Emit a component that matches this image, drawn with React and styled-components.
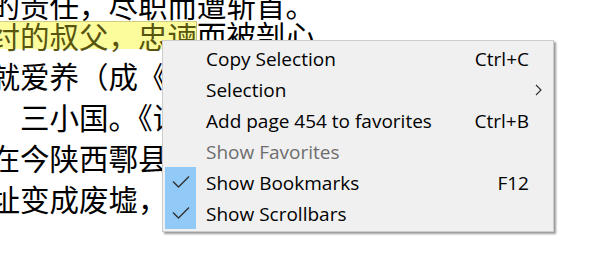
import React from "react";
import styled, { createGlobalStyle } from "styled-components";

const GlobalStyle = createGlobalStyle`
  html, body { margin: 0; padding: 0; background: #ffffff; overflow: hidden; }
`;

const Page = styled.div`
  position: relative;
  width: 605px;
  height: 254px;
  overflow: hidden;
  background: #ffffff;
`;

const TextBlock = styled.div`
  margin-left: -9.5px;
  margin-top: -5.5px;
  font-family: "Noto Sans CJK SC", "Noto Sans CJK JP", sans-serif;
  font-size: 29.5px;
  color: #000000;
  white-space: nowrap;
`;

const Line = styled.div`
  display: flex;
  align-items: center;
  height: ${(p) => p.$h}px;
`;

const Run = styled.span`
  display: block;
  line-height: 29.5px;
`;

const Highlight = styled.span`
  display: block;
  height: 28px;
  line-height: 28px;
  background: #fcfc9c;
  color: #57550f;
  box-shadow: inset 0 1px 0 #d2cd80, inset -1px 0 0 #c4bf78;
`;

const Menu = styled.div`
  position: absolute;
  left: 162px;
  top: 40px;
  width: 392px;
  box-sizing: border-box;
  background: #f0f0f0;
  border: 1px solid #cccccc;
  box-shadow: 2px 2px 2px rgba(0, 0, 0, 0.4);
  padding: 2px;
  font-family: "Open Sans", "Noto Sans", sans-serif;
  font-size: 19px;
`;

const Row = styled.div`
  display: grid;
  grid-template-columns: 31px 1fr auto 22px;
  height: 31px;
  align-items: center;
  color: ${(p) => (p.$disabled ? "#6d6d6d" : "#000000")};
`;

const CheckCell = styled.div`
  height: 100%;
  background: ${(p) => (p.$checked ? "#91c9f7" : "transparent")};
  display: flex;
  align-items: center;
  justify-content: center;
`;

const Label = styled.span`
  padding-left: 10px;
  white-space: nowrap;
`;

const Shortcut = styled.span`
  white-space: nowrap;
`;

const ArrowCell = styled.div`
  height: 100%;
  display: flex;
  align-items: center;
`;

const Check = () => (
  <svg width="31" height="31" viewBox="0 0 31 31">
    <polyline
      points="8,14.5 13.5,20 24,9.5"
      fill="none"
      stroke="#333333"
      strokeWidth="1.4"
    />
  </svg>
);

const Chevron = () => (
  <svg width="22" height="31" viewBox="0 0 22 31">
    <polyline
      points="7,11 12,16 7,21"
      fill="none"
      stroke="#333333"
      strokeWidth="1.2"
    />
  </svg>
);

const items = [
  { label: "Copy Selection", shortcut: "Ctrl+C" },
  { label: "Selection", submenu: true },
  { label: "Add page 454 to favorites", shortcut: "Ctrl+B" },
  { label: "Show Favorites", disabled: true },
  { label: "Show Bookmarks", shortcut: "F12", checked: true },
  { label: "Show Scrollbars", checked: true },
];

export default function App() {
  return (
    <Page>
      <GlobalStyle />
      <TextBlock>
        <Line $h={20}>
          <Run>的责任，尽职而遭斩首。</Run>
        </Line>
        <Line $h={41}>
          <Highlight>纣的叔父，忠谏</Highlight>
          <Run>而被剖心、</Run>
        </Line>
        <Line $h={41}>
          <Run>就爱养（成《诗经》）</Run>
        </Line>
        <Line $h={41}>
          <Run>　三小国。《诗经》</Run>
        </Line>
        <Line $h={41}>
          <Run>在今陕西鄠县</Run>
        </Line>
        <Line $h={41}>
          <Run>址变成废墟，</Run>
        </Line>
      </TextBlock>
      <Menu>
        {items.map((it) => (
          <Row key={it.label} $disabled={it.disabled}>
            <CheckCell $checked={it.checked}>{it.checked && <Check />}</CheckCell>
            <Label>{it.label}</Label>
            <Shortcut>{it.shortcut}</Shortcut>
            <ArrowCell>{it.submenu && <Chevron />}</ArrowCell>
          </Row>
        ))}
      </Menu>
    </Page>
  );
}
